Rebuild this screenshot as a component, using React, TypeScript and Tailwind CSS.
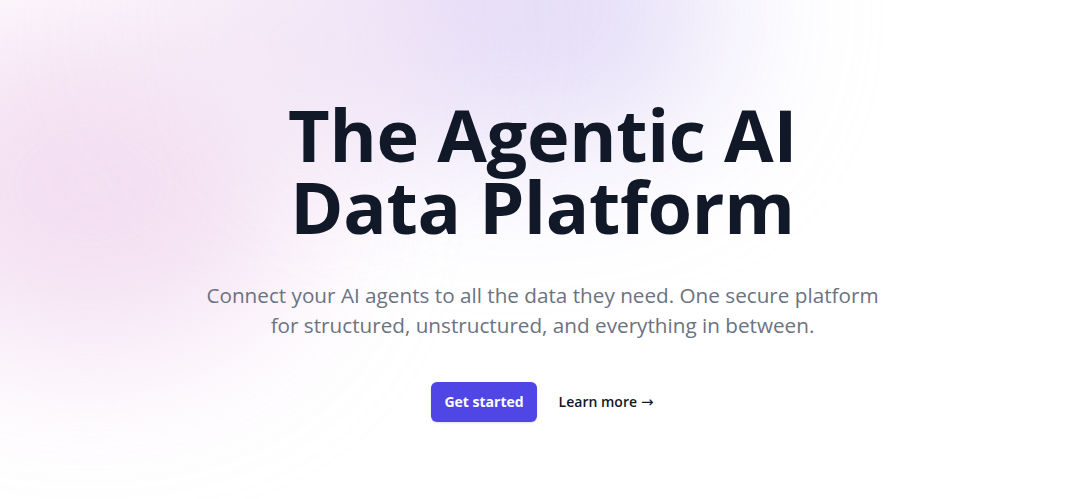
import React from "react";

export default function App() {
  return (
    <div className="relative min-h-screen w-full overflow-hidden bg-white font-['Open_Sans',sans-serif]">
      {/* background glow blobs */}
      <div className="pointer-events-none absolute left-[-120px] top-[20px] h-[330px] w-[420px] rounded-full bg-[#eed0ec] opacity-70 blur-[80px]" />
      <div className="pointer-events-none absolute left-[300px] top-[-120px] h-[260px] w-[420px] rounded-full bg-[#dcd2f5] opacity-80 blur-[80px]" />
      <div className="pointer-events-none absolute left-[150px] top-[-60px] h-[200px] w-[300px] rounded-full bg-[#f3e4f5] opacity-80 blur-[70px]" />

      <section className="relative flex flex-col items-center px-6 pt-[98px] text-center">
        <h1 className="text-[72px] font-bold leading-[72px] tracking-[-0.004em] text-[#111827]">
          <span className="block">The Agentic AI</span>
          <span className="block">Data Platform</span>
        </h1>
        <p className="mt-[38px] max-w-[700px] text-[20.7px] leading-[30px] text-[#6b7280]">
          Connect your AI agents to all the data they need. One secure platform
          <br />
          for structured, unstructured, and everything in between.
        </p>
        <div className="mt-[42px] flex items-center gap-[22px]">
          <a
            href="#"
            className="rounded-md bg-[#4f46e5] px-[13px] py-[10px] text-[14px] font-bold leading-5 text-white shadow-sm"
          >
            Get started
          </a>
          <a href="#" className="flex items-center gap-1 text-[14px] font-semibold leading-5 text-[#111827]">
            Learn more
            <span aria-hidden="true" className="font-['DejaVu_Sans',sans-serif] text-[15px] font-normal">→</span>
          </a>
        </div>
      </section>
    </div>
  );
}
